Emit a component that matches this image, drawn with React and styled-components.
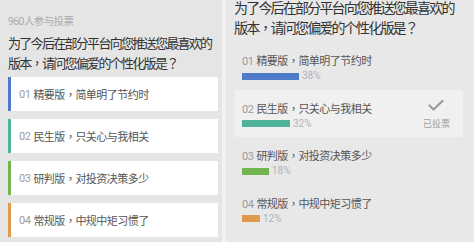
import React from "react";
import styled, { createGlobalStyle } from "styled-components";

const options = [
  { no: "01", text: "精要版，简单明了节约时", color: "#4d7bc9", pct: 38 },
  { no: "02", text: "民生版，只关心与我相关", color: "#4fb49b", pct: 32, voted: true },
  { no: "03", text: "研判版，对投资决策多少", color: "#72b44d", pct: 18 },
  { no: "04", text: "常规版，中规中矩习惯了", color: "#e09a4c", pct: 12 },
];

const question = ["为了今后在部分平台向您推送您最喜欢的", "版本，请问您偏爱的个性化版是？"];

// full-width punctuation sits centred in the reference, so give it the TC face
function withPunct(str) {
  return str.split(/([，？])/).map((part, i) =>
    part === "，" || part === "？" ? <Punct key={i}>{part}</Punct> : part
  );
}

export default function App() {
  return (
    <>
      <GlobalStyle />
      <Page>
        <VotePanel>
          <Count>960人参与投票</Count>
          <Question $spacing={-1.7} $size={13}>
            {question.map((line) => (
              <div key={line}>{withPunct(line)}</div>
            ))}
          </Question>
          <CardList>
            {options.map((o) => (
              <Card key={o.no} $accent={o.color}>
                <Num>{o.no}</Num>
                <Label>{withPunct(o.text)}</Label>
              </Card>
            ))}
          </CardList>
        </VotePanel>
        <ResultPanel>
          <Question $spacing={-1.8} $size={14} $top={-1}>
            {question.map((line) => (
              <div key={line}>{withPunct(line)}</div>
            ))}
          </Question>
          <ResultList>
            {options.map((o) => (
              <Result key={o.no} $voted={o.voted}>
                <ResultBody>
                  <div>
                    <Num>{o.no}</Num>
                    <Label>{withPunct(o.text)}</Label>
                  </div>
                  <BarRow>
                    <Bar $color={o.color} $pct={o.pct} />
                    <Percent>{o.pct}%</Percent>
                  </BarRow>
                </ResultBody>
                {o.voted && (
                  <Voted>
                    <svg width="16" height="11" viewBox="0 0 16 11">
                      <polyline
                        points="1.5,5.5 5.5,9.5 14.5,1"
                        fill="none"
                        stroke="#9a9a9a"
                        strokeWidth="2.2"
                        strokeLinecap="round"
                        strokeLinejoin="round"
                      />
                    </svg>
                    <VotedText>已投票</VotedText>
                  </Voted>
                )}
              </Result>
            ))}
          </ResultList>
        </ResultPanel>
      </Page>
    </>
  );
}

/*===================== Styles =====================*/
const GlobalStyle = createGlobalStyle`
  html, body {
    margin: 0;
    padding: 0;
    background: #f2f2f2;
  }
  body {
    font-family: Roboto, "Noto Sans CJK SC", sans-serif;
  }
`;

const Page = styled.div`
  display: flex;
  width: 474px;
  height: 242px;
  overflow: hidden;
  gap: 4px;
  background: #f2f2f2;
`;

const Punct = styled.span`
  font-family: "Noto Sans CJK TC", "Noto Sans CJK SC", sans-serif;
`;

const VotePanel = styled.div`
  width: 222px;
  flex: none;
  box-sizing: border-box;
  padding: 14px 4px 0 8px;
  background: #e5e5e5;
`;

const Count = styled.div`
  font-size: 10.5px;
  line-height: 16px;
  letter-spacing: -0.6px;
  color: #ababab;
`;

const Question = styled.div`
  margin-top: ${(p) => (p.$top !== undefined ? p.$top : 3.5)}px;
  font-size: ${(p) => p.$size}px;
  line-height: 19px;
  letter-spacing: ${(p) => p.$spacing}px;
  color: #333333;
  white-space: nowrap;
`;

const CardList = styled.div`
  display: flex;
  flex-direction: column;
  gap: 8px;
  margin-top: 4.5px;
`;

const Card = styled.div`
  display: flex;
  align-items: center;
  height: 34px;
  box-sizing: border-box;
  padding-left: 8px;
  background: #ffffff;
  border-left: 3px solid ${(p) => p.$accent};
  font-size: 11px;
  letter-spacing: -0.5px;
`;

const Num = styled.span`
  color: #9c9c9c;
  margin-right: 3px;
`;

const Label = styled.span`
  color: #555555;
`;

const ResultPanel = styled.div`
  flex: 1;
  box-sizing: border-box;
  padding: 0 11px 0 8px;
  background: #e8e8e8;
`;

const ResultList = styled.div`
  display: flex;
  flex-direction: column;
  margin-top: 4px;
`;

const Result = styled.div`
  display: flex;
  justify-content: space-between;
  height: 47.5px;
  box-sizing: border-box;
  margin-left: 1px;
  padding: 10px 13px 0 7px;
  background: ${(p) => (p.$voted ? "#f0f0f0" : "transparent")};
  font-size: 11px;
  line-height: 16px;
  letter-spacing: -0.5px;
`;

const ResultBody = styled.div`
  display: flex;
  flex-direction: column;
  gap: 2px;
`;

const BarRow = styled.div`
  display: flex;
  align-items: center;
  height: 8px;
  gap: 3px;
`;

const Bar = styled.div`
  width: ${(p) => p.$pct * 1.5}px;
  height: 7px;
  background: ${(p) => p.$color};
`;

const Percent = styled.span`
  font-size: 10px;
  line-height: 8px;
  letter-spacing: 0;
  color: #b3b3b3;
`;

const Voted = styled.div`
  display: flex;
  flex-direction: column;
  align-items: center;
  gap: 8px;
`;

const VotedText = styled.span`
  font-size: 9px;
  line-height: 10px;
  letter-spacing: 0;
  color: #9e9e9e;
`;
